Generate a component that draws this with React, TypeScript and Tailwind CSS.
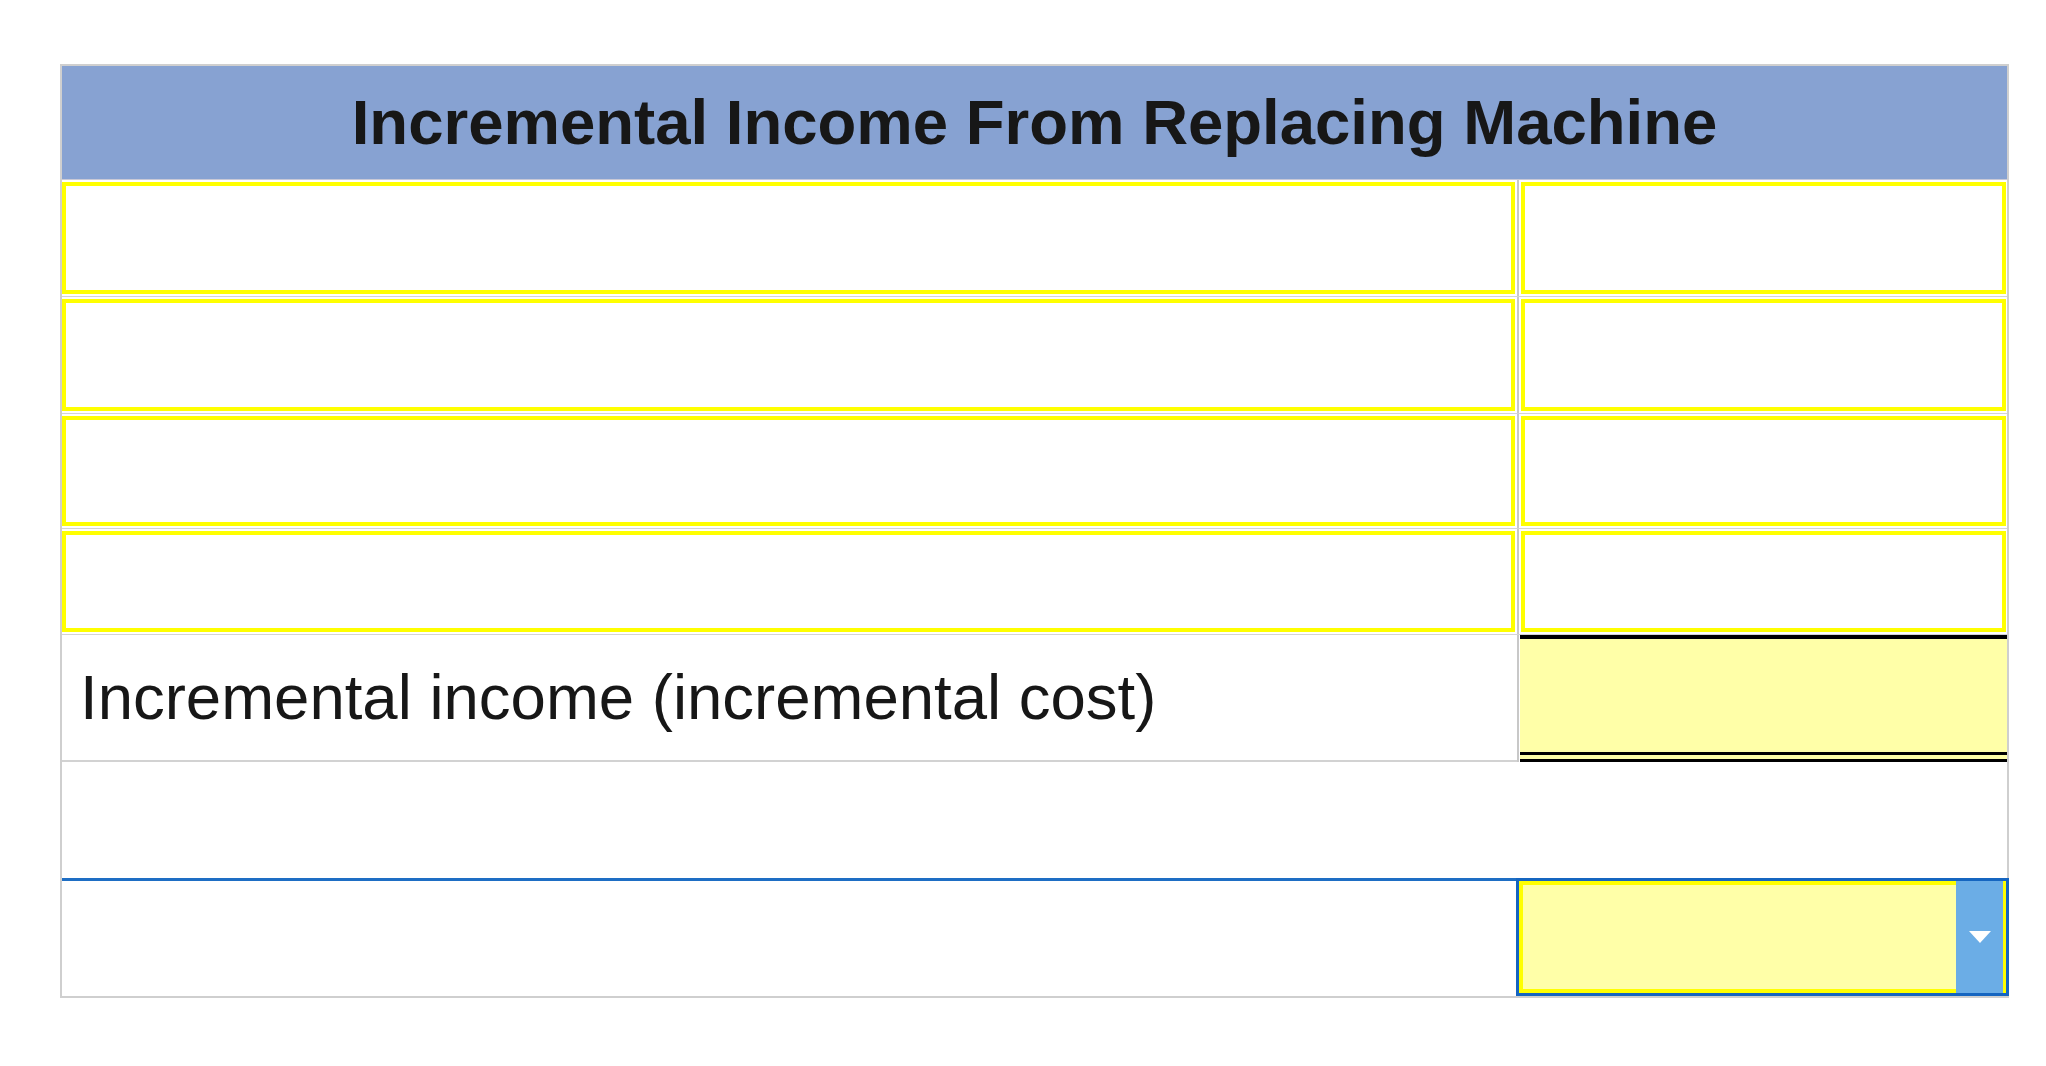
import React from "react";

function InputRow({ h }: { h: string }) {
  return (
    <div className={`flex ${h} border-b border-[#d4d4d4]`}>
      <div className="w-[1455px] py-[2px] pr-[2px]">
        <div className="h-full border-4 border-[#ffff00] bg-white" />
      </div>
      <div className="w-[2px] bg-[#c8c8c8]" />
      <div className="flex-1 py-[2px] pl-[2px] pr-[1px]">
        <div className="h-full border-4 border-[#ffff00] bg-white" />
      </div>
    </div>
  );
}

export default function App() {
  return (
    <div
      className="min-h-screen w-full bg-white pt-[64px] pl-[60px]"
      style={{ fontFamily: '"Liberation Sans", Arial, sans-serif' }}
    >
      <div className="w-[1949px] border-2 border-[#cfcfcf] bg-white">
        {/* Header */}
        <div className="flex h-[114px] items-center justify-center border-b border-[#c9c9d6] bg-[#87a2d2]">
          <span className="text-[63.5px] font-bold leading-none text-[#171717]">
            Incremental Income From Replacing Machine
          </span>
        </div>

        <InputRow h="h-[117px]" />
        <InputRow h="h-[117px]" />
        <InputRow h="h-[115px]" />
        <InputRow h="h-[106px]" />

        {/* Result row */}
        <div className="flex h-[127px]">
          <div className="flex w-[1455px] items-center border-b-2 border-[#d2d2d2] pl-[18px]">
            <span className="text-[63.5px] leading-none text-[#171717]">
              Incremental income (incremental cost)
            </span>
          </div>
          <div className="w-[2px] bg-[#c8c8c8]" />
          <div className="flex flex-1 flex-col pl-[1px]">
            <div className="h-[4px] bg-black" />
            <div className="flex-1 bg-[#ffffa8]" />
            <div className="h-[3px] bg-black" />
            <div className="h-[4px] bg-[#ffffa8]" />
            <div className="h-[3px] bg-black" />
          </div>
        </div>

        {/* Empty row */}
        <div className="h-[116px] bg-white" />

        {/* Dropdown row */}
        <div className="flex h-[118px]">
          <div className="w-[1455px] border-t-[3px] border-[#1e6ec4] bg-white" />
          <div className="-mr-[2px] -ml-[1px] flex flex-1 border-[3px] border-[#1565c0]">
            <div className="flex-1 border-4 border-r-0 border-[#ffff00] bg-[#ffffa8]" />
            <div className="flex w-[47px] items-center justify-center bg-[#6badE6]">
              <svg width="24" height="14" viewBox="0 0 24 14">
                <polygon points="1,1 23,1 12,13" fill="#ffffff" />
              </svg>
            </div>
            <div className="w-[3px] bg-[#ffff00]" />
          </div>
        </div>
      </div>
    </div>
  );
}
